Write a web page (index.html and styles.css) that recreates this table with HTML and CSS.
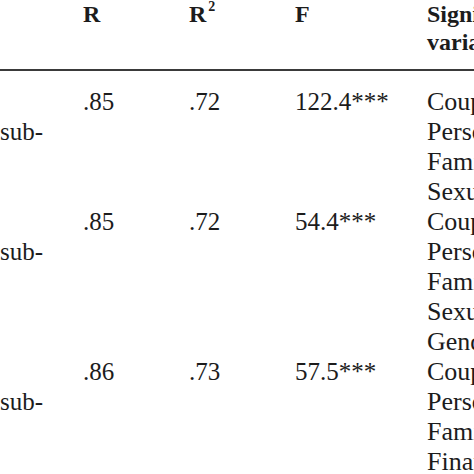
FILE: index.html
```html
<!DOCTYPE html>
<html>
<head>
<meta charset="utf-8">
<link rel="stylesheet" href="styles.css">
</head>
<body>
<div class="table">
  <div class="head">
    <div class="hc"></div>
    <div class="hc">R</div>
    <div class="hc">R<sup class="sq">2</sup></div>
    <div class="hc">F</div>
    <div class="hc">Significant<br>variables</div>
  </div>
  <div class="body">
    <div class="row">
      <div class="c label"><br>sub-</div>
      <div class="c">.85</div>
      <div class="c">.72</div>
      <div class="c">122.4***</div>
      <div class="c vars">Couple<br>Personal<br>Family<br>Sexual</div>
    </div>
    <div class="row">
      <div class="c label"><br>sub-</div>
      <div class="c">.85</div>
      <div class="c">.72</div>
      <div class="c">54.4***</div>
      <div class="c vars">Couple<br>Personal<br>Family<br>Sexual<br>Gender</div>
    </div>
    <div class="row">
      <div class="c label"><br>sub-</div>
      <div class="c">.86</div>
      <div class="c">.73</div>
      <div class="c">57.5***</div>
      <div class="c vars">Couple<br>Personal<br>Family<br>Financial</div>
    </div>
  </div>
</div>
</body>
</html>
```

FILE: styles.css
```css
html, body {
  margin: 0;
  padding: 0;
  background: #ffffff;
  overflow: hidden;
}
body {
  width: 474px;
  height: 474px;
  font-family: "Liberation Serif", "Times New Roman", serif;
  color: #1c1c1c;
}
.table {
  width: 700px;
}
.head, .row {
  display: grid;
  grid-template-columns: 83px 106px 106px 132px 273px;
}
.head {
  font-weight: bold;
  font-size: 24px;
  line-height: 28px;
  height: 56px;
  padding-bottom: 13px;
  border-bottom: 2px solid #3a3a3a;
}
.sq {
  font-size: 14px;
  line-height: 0;
  vertical-align: 11px;
  margin-left: 2px;
}
.body {
  padding-top: 16px;
  font-size: 25px;
  line-height: 30px;
}
.c {
  white-space: nowrap;
}
.label {
  font-size: 25px;
}
.vars {
  font-size: 26px;
}
```
